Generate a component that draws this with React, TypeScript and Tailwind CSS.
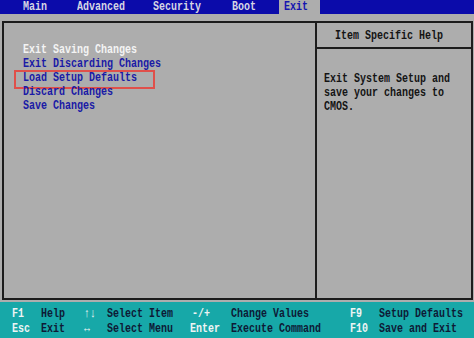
import React from "react";

const mono = { fontFamily: '"Liberation Mono", "DejaVu Sans Mono", monospace' };

function Line({ children, className = "" }: { children: React.ReactNode; className?: string }) {
  return (
    <div className={`h-[14px] leading-[14px] whitespace-pre scale-y-[1.35] ${className}`}>{children}</div>
  );
}

export default function App() {
  const items = [
    { t: "Exit Saving Changes", c: "text-[#f4f4f4]" },
    { t: "Exit Discarding Changes", c: "text-[#1a1aa6]" },
    { t: "Load Setup Defaults", c: "text-[#1a1aa6]", sel: true },
    { t: "Discard Changes", c: "text-[#1a1aa6]" },
    { t: "Save Changes", c: "text-[#1a1aa6]" },
  ];
  const bottom = [
    ["F1", "Help", "↑↓", "Select Item", "-/+", "Change Values", "F9", "Setup Defaults"],
    ["Esc", "Exit", "↔", "Select Menu", "Enter", "Execute Command", "F10", "Save and Exit"],
  ];
  return (
    <div style={mono} className="w-[474px] h-[338px] bg-[#adadad] flex flex-col text-[10px] font-bold overflow-hidden">
      {/* top menu bar */}
      <div className="h-[14px] bg-[#0b0baa] flex items-stretch text-[#d6d6e4]">
        <div className="ml-[23px] leading-[14px] scale-y-[1.3]">Main</div>
        <div className="ml-[30px] leading-[14px] scale-y-[1.3]">Advanced</div>
        <div className="ml-[28px] leading-[14px] scale-y-[1.3]">Security</div>
        <div className="ml-[31px] leading-[14px] scale-y-[1.3]">Boot</div>
        <div className="ml-[23px] w-[41px] bg-[#adadad] pl-[5px] text-[#1414b0]">
          <div className="leading-[14px] scale-y-[1.3]">Exit</div>
        </div>
      </div>
      {/* main area */}
      <div className="flex-1 pt-[7px] pl-[2px] pr-[1px] pb-[2px]">
        <div className="h-full border-2 border-[#1c1c1c] flex">
          <div className="w-[313px] border-r-2 border-[#1c1c1c] pt-[20px] pl-[19px]">
            {items.map((it) => (
              <div key={it.t} className="relative">
                {it.sel && (
                  <div className="absolute left-[-9px] top-[-1px] w-[141px] h-[19px] border-2 border-[#e0504a]" />
                )}
                <Line className={it.c}>{it.t}</Line>
              </div>
            ))}
          </div>
          <div className="flex-1 flex flex-col text-[#141414]">
            <div className="h-[26px] border-b-2 border-[#1c1c1c] flex items-center pl-[18px] pt-[1px]">
              <Line>Item Specific Help</Line>
            </div>
            <div className="pt-[23px] pl-[7px]">
              <Line>Exit System Setup and</Line>
              <Line>save your changes to</Line>
              <Line>CMOS.</Line>
            </div>
          </div>
        </div>
      </div>
      {/* bottom bar */}
      <div className="h-[36px] bg-[#17a8a8] pt-[4px] pl-[12px]">
        {bottom.map((r, i) => (
          <div key={i} className="flex h-[15px] leading-[15px] scale-y-[1.3] whitespace-pre">
            <span className="w-[29px] text-[#eef4f4]">{r[0]}</span>
            <span className="w-[43px] text-[#0e1a36]">{r[1]}</span>
            <span className="w-[23px] text-[#eef4f4]">{r[2]}</span>
            <span className="w-[83px] text-[#0e1a36]">{r[3]}</span>
            <span className={`w-[41px] text-[#eef4f4] ${i === 0 ? "pl-[2px]" : ""}`}>{r[4]}</span>
            <span className="w-[119px] text-[#0e1a36]">{r[5]}</span>
            <span className="w-[29px] text-[#eef4f4]">{r[6]}</span>
            <span className="text-[#0e1a36]">{r[7]}</span>
          </div>
        ))}
      </div>
    </div>
  );
}
